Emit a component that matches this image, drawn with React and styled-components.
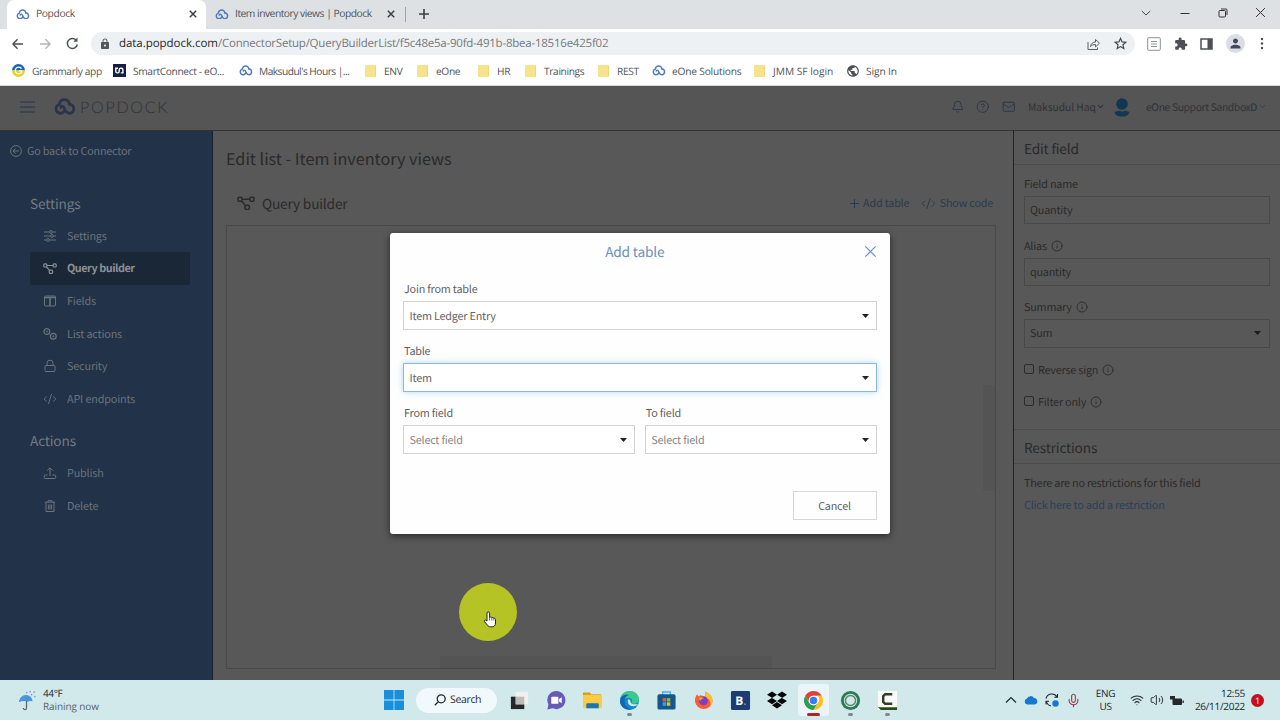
import React from "react";
import styled, { createGlobalStyle, css } from "styled-components";
import {
  Bell,
  ChevronDown,
  CircleQuestionMark,
  CodeXml,
  Info,
  Mail,
  Mic,
  Volume2,
  Wifi,
} from "lucide-react";
import { MdExtension, MdLock, MdPerson, MdPublic } from "react-icons/md";
import { FaDropbox } from "react-icons/fa";

const GlobalStyle = createGlobalStyle`
  * {
    box-sizing: border-box;
  }
  body {
    margin: 0;
    overflow: hidden;
    font-family: "Noto Sans CJK SC", "Open Sans", sans-serif;
    text-rendering: geometricPrecision;
  }
  svg {
    display: block;
    flex-shrink: 0;
  }
`;

const Screen = styled.div`
  position: relative;
  width: 1280px;
  height: 720px;
  display: flex;
  flex-direction: column;
  overflow: hidden;
`;

const Text = styled.span`
  display: block;
  white-space: nowrap;
  font-size: ${({ $size }) => $size || 10.8}px;
  line-height: 18px;
  letter-spacing: ${({ $ls }) => ($ls === undefined ? -0.2 : $ls)}px;
  font-weight: ${({ $bold }) => ($bold ? 700 : 400)};
  color: ${({ $color }) => $color || "inherit"};
`;

const Heading = styled(Text)`
  font-size: 13.7px;
  letter-spacing: -0.18px;
`;

/* ---------- browser ---------- */

const Browser = styled.div`
  font-family: "Open Sans", sans-serif;
  background: #fff;
  height: 86px;
  border-bottom: 1px solid #d5d7d8;
  color: #505458;
`;

const TabStrip = styled.div`
  display: flex;
  height: 29px;
  padding-left: 7px;
  background: #dde1e4;
`;

const Tab = styled.div`
  display: flex;
  align-items: center;
  width: ${({ $width }) => $width}px;
  height: 29px;
  padding: 0 9px 1px 9px;
  border-radius: 7px 7px 0 0;
  background: ${({ $active }) => ($active ? "#fff" : "transparent")};
  svg:last-child {
    margin-left: auto;
  }
  ${Text} {
    margin-left: 6px;
  }
`;

const TabDivider = styled.div`
  width: 1px;
  height: 15px;
  margin: 7px 13px 0 1px;
  background: #9ea3a8;
`;

const WindowButtons = styled.div`
  display: flex;
  align-items: center;
  gap: 26.6px;
  height: 25px;
  margin-left: auto;
  padding-right: 14px;
`;

const Toolbar = styled.div`
  display: flex;
  align-items: center;
  height: 29px;
  padding: 0 12px;
`;

const NavButtons = styled.div`
  display: flex;
  align-items: center;
  gap: 15px;
  width: 79px;
`;

const Omnibox = styled.div`
  display: flex;
  align-items: center;
  width: 1045px;
  height: 23px;
  padding: 0 8px 0 8px;
  border-radius: 12px;
  background: #eef1f4;
  svg:nth-last-child(2) {
    margin-left: auto;
    margin-right: 14px;
  }
  ${Text} {
    margin-left: 8px;
    color: #75797d;
  }
  b {
    font-weight: 400;
    letter-spacing: -0.03px;
    color: #25282b;
  }
`;

const ToolbarIcons = styled.div`
  display: flex;
  align-items: center;
  gap: 12.5px;
  margin-left: 12px;
`;

const Avatar = styled.div`
  display: grid;
  place-items: center;
  width: 19px;
  height: 19px;
  border-radius: 50%;
  background: #dcdde6;
`;

const Bookmarks = styled.div`
  display: flex;
  height: 25px;
  padding-left: 12px;
`;

const Bookmark = styled.div`
  display: grid;
  grid-template-columns: ${({ $icon }) => $icon}px auto;
  align-items: center;
  justify-content: start;
  width: ${({ $width }) => $width}px;
  flex-shrink: 0;
`;

const Folder = styled.div`
  width: 11px;
  height: 12px;
  border-radius: 1px;
  background: #f7e38c;
  border-right: 1px solid #ecd779;
`;

/* ---------- application ---------- */

const AppShell = styled.div`
  display: flex;
  flex-direction: column;
  height: 594px;
  background: #585858;
  color: #2a2a2a;
`;

const Header = styled.div`
  display: flex;
  align-items: center;
  height: 46px;
  padding: 0 13px 3px 20px;
  background: #555;
  border-bottom: 1px solid #333;
`;

const Brand = styled.div`
  display: flex;
  align-items: center;
  gap: 4px;
  margin-left: 19px;
  color: #29354b;
`;

const BrandName = styled.span`
  font: 300 16px/18px Lato, sans-serif;
  letter-spacing: 1.75px;
  color: #303235;
  padding-top: 3px;
`;

const HeaderActions = styled.div`
  display: flex;
  align-items: center;
  margin-left: auto;
  color: #29354b;
  > svg {
    margin: 2px 0 0 12px;
  }
`;

const HeaderIcons = styled.div`
  display: flex;
  gap: 12px;
`;

const UserName = styled.div`
  display: flex;
  align-items: center;
  width: ${({ $width }) => $width}px;
  margin-left: ${({ $gap }) => $gap}px;
  color: #303236;
  svg {
    margin-left: auto;
  }
`;

const Body = styled.div`
  display: flex;
  flex: 1;
`;

const Sidebar = styled.div`
  width: 213px;
  padding-top: 10.6px;
  background: #223248;
  border-right: 1px solid #17202c;
  color: #6b737c;
`;

const BackLink = styled.div`
  display: flex;
  align-items: center;
  gap: 5px;
  height: 18px;
  padding-left: 10px;
`;

const SideHeading = styled.div`
  padding-left: 30px;
  margin-top: ${({ $top }) => $top}px;
  color: #737a82;
`;

const SideItem = styled.div`
  display: grid;
  grid-template-columns: 14px auto;
  gap: 10px;
  align-items: center;
  justify-content: start;
  width: 160px;
  height: 32.6px;
  margin-left: 30px;
  padding-left: 13px;
  border-radius: 2px;
  ${({ $active }) =>
    $active &&
    css`
      background: #1a2736;
      color: #8c9197;
    `}
`;

const SideGroup = styled.div`
  margin-top: 8px;
`;

const Main = styled.div`
  width: 800px;
  padding: 18px 17px 11px 13px;
`;

const QueryBar = styled.div`
  display: flex;
  align-items: center;
  height: 18px;
  margin: 27px 3px 13px 11px;
  > ${Heading} {
    margin-left: 7px;
  }
`;

const BarLinks = styled.div`
  display: flex;
  align-items: center;
  margin-left: auto;
  color: #2b3a52;
  svg + ${Text} {
    margin-left: 3.5px;
  }
  ${Text} + svg {
    margin-left: 12px;
  }
`;

const Canvas = styled.div`
  display: grid;
  grid-template-columns: 1fr 12px;
  grid-template-rows: 1fr 12px;
  height: 444px;
  border: 1px solid #494949;
`;

const VerticalThumb = styled.div`
  height: 106px;
  margin-top: 159px;
  background: #545454;
`;

const HorizontalThumb = styled.div`
  grid-row: 2;
  width: 332px;
  margin-left: 213px;
  background: #545454;
`;

const Panel = styled.div`
  width: 267px;
  border-left: 1px solid #222;
`;

const PanelTitle = styled.div`
  height: 34px;
  padding: 8px 0 0 10px;
  border-bottom: 1px solid #4b4b4b;
`;

const PanelBody = styled.div`
  padding: 10px 10px 0;
`;

const LabelRow = styled.div`
  display: flex;
  align-items: center;
  gap: 4px;
  height: 18px;
  margin-bottom: ${({ $below }) => $below || 3}px;
`;

const Input = styled.div`
  display: flex;
  align-items: center;
  justify-content: space-between;
  height: 28.4px;
  width: 246px;
  margin-bottom: ${({ $below }) => $below || 12.2}px;
  padding: 0 8px 0 5px;
  border: 1px solid #494949;
`;

const CheckRow = styled.div`
  display: flex;
  align-items: center;
  gap: 4px;
  height: 18px;
  margin-bottom: 14px;
`;

const CheckBox = styled.div`
  width: 10px;
  height: 10px;
  margin-bottom: 3px;
  border: 1px solid #2b2b2b;
  border-radius: 2px;
`;

const Restrictions = styled.div`
  margin-top: 18px;
  border-top: 1px solid #4c4c4c;
`;

/* ---------- modal ---------- */

const Modal = styled.div`
  position: absolute;
  left: 390px;
  top: 233px;
  width: 499.5px;
  height: 300.5px;
  padding: 9px 13px 0;
  border-radius: 3px;
  background: #fefefe;
  box-shadow: 0 2px 7px rgba(0, 0, 0, 0.55);
  color: #5f5f5f;
`;

const ModalHeader = styled.div`
  display: grid;
  grid-template-columns: 1fr auto;
  align-items: center;
  height: 18px;
  margin-bottom: 20px;
  color: #6a8fbf;
  ${Heading} {
    padding-left: 3px;
    text-align: center;
  }
`;

const FieldLabel = styled.div`
  padding-left: 1px;
  height: 18px;
  margin-bottom: 3px;
`;

const Select = styled.div`
  display: flex;
  align-items: center;
  justify-content: space-between;
  height: 29px;
  padding: 0 7px 0 5.5px;
  border: 1px solid ${({ $focused }) => ($focused ? "#8bb6de" : "#d3d3d3")};
  background: #fff;
  box-shadow: ${({ $focused }) =>
    $focused ? "0 0 6px rgba(102, 175, 233, 0.5)" : "none"};
  color: ${({ $placeholder }) => ($placeholder ? "#868686" : "#626262")};
`;

const FieldBlock = styled.div`
  height: 62px;
`;

const FieldPair = styled.div`
  display: grid;
  grid-template-columns: 1fr 1fr;
  gap: 10px;
`;

const CancelButton = styled.div`
  display: grid;
  place-items: center;
  width: 84px;
  height: 29px;
  margin: 25px 0 0 auto;
  border: 1px solid #d6d6d6;
`;

const Pointer = styled.div`
  position: absolute;
  left: 459px;
  top: 583px;
  width: 58px;
  height: 58px;
  padding: 28px 0 0 24px;
  border-radius: 50%;
  background: #b5c424;
`;

/* ---------- taskbar ---------- */

const Taskbar = styled.div`
  display: grid;
  grid-template-columns: 384px 1fr auto;
  height: 40px;
  background: #d2e9ec;
  font-family: "Open Sans", sans-serif;
  color: #20282b;
`;

const Weather = styled.div`
  display: flex;
  align-items: center;
  gap: 7px;
  padding-left: 19px;
  ${Text} {
    line-height: 13px;
  }
`;

const TaskIcons = styled.div`
  display: flex;
  align-items: center;
`;

const SearchPill = styled.div`
  display: flex;
  align-items: center;
  gap: 4px;
  width: 81px;
  height: 25px;
  margin: 0 4px 0 12px;
  padding-left: 18px;
  border-radius: 13px;
  background: #f2f9fc;
`;

const TaskIcon = styled.div`
  display: grid;
  grid-template-rows: 34px 3px;
  justify-items: center;
  align-items: center;
  width: 36.8px;
  height: 40px;
  padding-top: 3px;
`;

const TaskTile = styled.div`
  display: grid;
  place-items: center;
  width: 31px;
  height: 32px;
  border-radius: 3px;
  background: ${({ $active }) => ($active ? "#ebf5f7" : "transparent")};
`;

const RunMark = styled.div`
  width: ${({ $active }) => ($active ? 13 : 5)}px;
  height: 2.5px;
  margin-top: -8px;
  border-radius: 2px;
  background: ${({ $active }) => ($active ? "#b3202c" : "#7c8a8f")};
`;

const Tray = styled.div`
  display: flex;
  align-items: center;
  padding-right: 16px;
`;

const TrayIcons = styled.div`
  display: flex;
  align-items: center;
  gap: ${({ $gap }) => $gap}px;
`;

const TrayText = styled.div`
  width: ${({ $width }) => $width}px;
  text-align: ${({ $align }) => $align};
  ${Text} {
    line-height: 13px;
  }
`;

const Notification = styled.div`
  display: grid;
  place-items: center;
  width: 13px;
  height: 13px;
  margin-left: 6px;
  border-radius: 50%;
  background: #c50f1f;
  color: #fff;
  font-size: 9px;
  line-height: 13px;
`;

/* ---------- drawings ---------- */

const CloudLogo = ({ width = 14, color = "#4f7dbd", stroke = 2.3 }) => (
  <svg
    width={width}
    height={(width * 17) / 22}
    viewBox="0 0 22 17"
    fill="none"
    stroke={color}
    strokeWidth={stroke}
    strokeLinecap="round"
  >
    <path d="M10.8 12.4c-1 1.9-2.400 2.900-4.500 2.900A4.500 4.500 0 0 1 5.200 6.500C5.700 3.500 7.700 1.700 10.500 1.700c2.600 0 4.400 1.700 5.200 4.700" />
    <path d="M15.700 6.400a4.500 4.500 0 0 1 .3 8.900c-2.300 0-3.600-1.200-4.600-3L9.600 9C8.800 7.600 7 7.800 6.600 9.400" />
  </svg>
);

const Cross = ({ size = 8, width = 1.5, color = "#3c4043" }) => (
  <svg width={size} height={size} viewBox="0 0 10 10" stroke={color} strokeWidth={(width * 10) / size}>
    <path d="M1 1l8 8M9 1L1 9" />
  </svg>
);

const Caret = ({ color = "#222" }) => (
  <svg width="7" height="4" viewBox="0 0 7 4">
    <path d="M0 0h7L3.5 4z" fill={color} />
  </svg>
);

const Nodes = ({ size = 14 }) => (
  <svg width={size} height={size * 0.8} viewBox="0 0 18 14" fill="none" stroke="currentColor" strokeWidth="1.5">
    <rect x="1" y="1" width="4" height="4" rx="1.3" />
    <rect x="13" y="1" width="4" height="4" rx="1.3" />
    <rect x="8" y="9" width="4.400" height="4.200" rx="1.300" />
    <path d="M5 3h8M4.500 4.800L8.600 9.500" />
  </svg>
);

const Arrow = ({ flip, color }) => (
  <svg width="12" height="12" viewBox="0 0 12 12" fill="none" stroke={color} strokeWidth="1.4">
    <path d={flip ? "M1 6h10M6.5 1.3L11 6l-4.5 4.7" : "M11 6H1M5.5 1.3L1 6l4.5 4.7"} />
  </svg>
);

const SideIcon = ({ name }) => {
  const shapes = {
    settings: (
      <>
        <path d="M1 3h5.600M9.400 3H13M1 7h6.600M10.400 7H13M1 11h2.600M6.400 11H13" />
        <circle cx="8" cy="3" r="1.400" />
        <circle cx="9" cy="7" r="1.400" />
        <circle cx="5" cy="11" r="1.400" />
      </>
    ),
    fields: (
      <>
        <rect x="1.5" y="2" width="11" height="10" rx="0.7" />
        <path d="M1.5 3.5h11M7 4v8" strokeWidth="1.6" />
      </>
    ),
    actions: (
      <>
        <circle cx="3.800" cy="4.500" r="2.900" strokeWidth="1.200" />
        <circle cx="3.800" cy="4.500" r=".6" />
        <circle cx="10.300" cy="9.300" r="2.900" strokeWidth="1.200" />
        <circle cx="10.300" cy="9.300" r=".6" />
      </>
    ),
    security: (
      <>
        <rect x="2" y="6.5" width="10" height="6" rx="1" />
        <path d="M4 6.5V4.2a3 3 0 0 1 6 0v2.3" />
      </>
    ),
    publish: (
      <>
        <path d="M4.500 9H2.200a.9.9 0 0 0-.9.9v1.700a.9.9 0 0 0 .9.9h9.600a.9.9 0 0 0 .9-.9V9.900a.9.9 0 0 0-.9-.9H9.500" />
        <path d="M7 10V2M4.200 4.600L7 1.800l2.800 2.800" />
      </>
    ),
    remove: (
      <path d="M1.800 3.200h10.400M5 3V1.700h4V3M3 3.400V12.500h8V3.400M5.400 5.500v5M7 5.500v5M8.600 5.500v5" />
    ),
  };
  return (
    <svg width="14" height="14" viewBox="0 0 14 14" fill="none" stroke="currentColor" strokeWidth="1">
      {shapes[name]}
    </svg>
  );
};

/* ---------- sections ---------- */

const bookmarks = [
  { label: "Grammarly app", width: 101, kind: "grammarly" },
  { label: "SmartConnect - eO...", width: 126, kind: "smart" },
  { label: "Maksudul's Hours |...", width: 126, kind: "cloud", ls: -0.52 },
  { label: "ENV", width: 52 },
  { label: "eOne", width: 61 },
  { label: "HR", width: 47 },
  { label: "Trainings", width: 73 },
  { label: "REST", width: 54 },
  { label: "eOne Solutions", width: 102, kind: "cloud", ls: -0.2 },
  { label: "JMM SF login", width: 92, ls: 0 },
  { label: "Sign In", width: 60, kind: "globe", ls: -0.1 },
];

const BookmarkIcon = ({ kind }) => {
  if (kind === "cloud") return <CloudLogo />;
  if (kind === "globe") return <MdPublic size={14} color="#4b4e52" />;
  if (kind === "grammarly")
    return (
      <svg width="13" height="13" viewBox="0 0 13 13">
        <path d="M0 6.500a6.500 6.500 0 0 1 13 0z" fill="#1763b6" />
        <path d="M0 6.500a6.500 6.500 0 0 0 13 0z" fill="#f2cf1d" />
        <path d="M9.500 4.700A3.400 3.400 0 1 0 9.700 8V6.800H7" fill="none" stroke="#fff" strokeWidth="1.300" />
      </svg>
    );
  if (kind === "smart")
    return (
      <svg width="13" height="13" viewBox="0 0 13 13">
        <rect width="13" height="13" fill="#141f45" />
        <path d="M5 4.300H2.800v3.200a1.400 1.400 0 0 0 1.400 1.400h.6a1.400 1.400 0 0 0 1.400-1.400V5.700a1.400 1.400 0 0 1 1.400-1.400h.9a1.400 1.400 0 0 1 1.400 1.400v3.200H7.800" fill="none" stroke="#fff" strokeWidth="1.400" />
      </svg>
    );
  return <Folder />;
};

const BrowserChrome = () => (
  <Browser>
    <TabStrip>
      <Tab $active $width={199}>
        <CloudLogo />
        <Text $size={10.3} $ls={-0.4}>Popdock</Text>
        <Cross />
      </Tab>
      <Tab $width={198}>
        <CloudLogo />
        <Text $size={10.3} $ls={-0.5}>Item inventory views | Popdock</Text>
        <Cross />
      </Tab>
      <TabDivider />
      <svg width="10" height="28" viewBox="0 0 10 28" stroke="#3c4043" strokeWidth="1.600">
        <path d="M0 14h10M5 9v10" />
      </svg>
      <WindowButtons>
        <svg width="10" height="10" viewBox="0 0 10 10" fill="none" stroke="#44484c">
          <path d="M.8 3l4.200 4L9.200 3" />
        </svg>
        <svg width="14" height="10" viewBox="0 0 14 10" stroke="#333">
          <path d="M2.500 5.500h9" />
        </svg>
        <svg width="10" height="10" viewBox="0 0 10 10" fill="none" stroke="#333">
          <rect x="1" y="2.500" width="6.500" height="6.500" rx="1" />
          <path d="M3 1h5a1 1 0 0 1 1 1v5" />
        </svg>
        <Cross size={11} width={1} color="#333" />
      </WindowButtons>
    </TabStrip>
    <Toolbar>
      <NavButtons>
        <Arrow color="#4c5054" />
        <Arrow flip color="#b4b7ba" />
        <svg width="13" height="13" viewBox="0 0 13 13" fill="none" stroke="#4c5054" strokeWidth="1.500">
          <path d="M11.300 7.500A5 5 0 1 1 10 3" />
          <path d="M11.500.5v4.200H7.300z" fill="#4c5054" stroke="none" />
        </svg>
      </NavButtons>
      <Omnibox>
        <MdLock size={12} color="#54585c" />
        <Text $size={11.5} $ls={-0.23}>
          <b>data.popdock.com</b>/ConnectorSetup/QueryBuilderList/f5c48e5a-90fd-491b-8bea-18516e425f02
        </Text>
        <svg width="13" height="12" viewBox="0 0 13 12" fill="none" stroke="#5a5e62">
          <path d="M1 4v7.500h9.500V9.500M3.500 8.500C4 5.500 6 4 8.500 4V1.500l4 3.700-4 3.700V6.500c-2 0-3.700.5-5 2z" />
        </svg>
        <svg width="13" height="13" viewBox="0 0 24 24" fill="none" stroke="#44484c" strokeWidth="2.200">
          <path d="M12 2.500l2.900 6.500 7 .7-5.300 4.700 1.500 6.900L12 17.700l-6.100 3.600 1.500-6.900L2.100 9.700l7-.7z" />
        </svg>
      </Omnibox>
      <ToolbarIcons>
        <svg width="14" height="14" viewBox="0 0 14 14" fill="none" stroke="#8e9194">
          <rect x=".7" y=".7" width="12.600" height="12.600" rx="1" />
          <path d="M4 4.500h6M4 7h6M4 9.500h6" />
        </svg>
        <MdExtension size={14} color="#4c5054" />
        <svg width="13" height="12" viewBox="0 0 13 12">
          <rect x="1" y="1" width="11" height="10" fill="none" stroke="#4c5054" strokeWidth="1.500" />
          <rect x="7.500" y="1" width="4.500" height="10" fill="#4c5054" />
        </svg>
        <Avatar>
          <MdPerson size={15} color="#45465a" />
        </Avatar>
        <svg width="11" height="13" viewBox="0 0 11 13" fill="#4c5054">
          <circle cx="5" cy="2" r="1.200" />
          <circle cx="5" cy="6.500" r="1.200" />
          <circle cx="5" cy="11" r="1.200" />
        </svg>
      </ToolbarIcons>
    </Toolbar>
    <Bookmarks>
      {bookmarks.map(({ label, width, kind, ls = -0.35 }) => (
        <Bookmark key={label} $width={width} $icon={kind ? 20 : 19}>
          <BookmarkIcon kind={kind} />
          <Text $size={10.2} $ls={ls}>{label}</Text>
        </Bookmark>
      ))}
    </Bookmarks>
  </Browser>
);

const AppHeader = () => (
  <Header>
    <svg width="15" height="12" viewBox="0 0 15 12" stroke="#29354b" strokeWidth="1.200">
      <path d="M0 1h15M0 6h15M0 11h15" />
    </svg>
    <Brand>
      <CloudLogo width={22} color="#29354b" stroke={2.7} />
      <BrandName>POPDOCK</BrandName>
    </Brand>
    <HeaderActions>
      <HeaderIcons>
        <Bell size={13.5} strokeWidth={1.7} />
        <CircleQuestionMark size={13.5} strokeWidth={1.7} />
        <Mail size={13.5} strokeWidth={1.7} />
      </HeaderIcons>
      <UserName $width={74} $gap={13}>
        <Text $size={10.3} $ls={-0.05}>Maksudul Haq</Text>
        <ChevronDown size={9} strokeWidth={3} />
      </UserName>
      <svg width="16" height="19" viewBox="0 0 16 19" fill="#123750">
        <circle cx="8" cy="6" r="5.800" />
        <path d="M.5 13.500c2 .5 3-.5 4-1 2 1.400 5 1.400 7 0 1 .5 2 1.500 4 1-.3 3-3 5-7.500 5s-7.200-2-7.500-5z" />
      </svg>
      <UserName $width={121} $gap={16}>
        <Text $size={10.3} $ls={-0.35}>eOne Support SandboxD</Text>
        <ChevronDown size={9} strokeWidth={2} />
      </UserName>
    </HeaderActions>
  </Header>
);

const settingsItems = [
  { label: "Settings", icon: <SideIcon name="settings" /> },
  { label: "Query builder", icon: <Nodes />, active: true },
  { label: "Fields", icon: <SideIcon name="fields" /> },
  { label: "List actions", icon: <SideIcon name="actions" /> },
  { label: "Security", icon: <SideIcon name="security" /> },
  { label: "API endpoints", icon: <CodeXml size={14} strokeWidth={1.6} /> },
];

const actionItems = [
  { label: "Publish", icon: <SideIcon name="publish" /> },
  { label: "Delete", icon: <SideIcon name="remove" /> },
];

const SideList = ({ items }) => (
  <SideGroup>
    {items.map(({ label, icon, active }) => (
      <SideItem key={label} $active={active}>
        {icon}
        <Text $bold={active} $ls={active ? -0.45 : -0.15}>{label}</Text>
      </SideItem>
    ))}
  </SideGroup>
);

const SideNav = () => (
  <Sidebar>
    <BackLink>
      <svg width="12" height="12" viewBox="0 0 12 12" fill="none" stroke="currentColor">
        <circle cx="6" cy="6" r="5.400" />
        <path d="M9 6H3.300M5.500 3.500L3 6l2.500 2.500" />
      </svg>
      <Text>Go back to Connector</Text>
    </BackLink>
    <SideHeading $top={34}>
      <Heading>Settings</Heading>
    </SideHeading>
    <SideList items={settingsItems} />
    <SideHeading $top={15.5}>
      <Heading>Actions</Heading>
    </SideHeading>
    <SideList items={actionItems} />
  </Sidebar>
);

const QueryBuilder = () => (
  <Main>
    <Text $size={16.2} $ls={0}>Edit list - Item inventory views</Text>
    <QueryBar>
      <Nodes size={18} />
      <Heading>Query builder</Heading>
      <BarLinks>
        <svg width="11" height="11" viewBox="0 0 11 11" stroke="currentColor">
          <path d="M1 5.500h9M5.500 1v9" />
        </svg>
        <Text>Add table</Text>
        <CodeXml size={15} strokeWidth={1.6} />
        <Text>Show code</Text>
      </BarLinks>
    </QueryBar>
    <Canvas>
      <div />
      <VerticalThumb />
      <HorizontalThumb />
    </Canvas>
  </Main>
);

const InfoIcon = () => <Info size={12} strokeWidth={1.8} />;

const FieldPanel = () => (
  <Panel>
    <PanelTitle>
      <Heading>Edit field</Heading>
    </PanelTitle>
    <PanelBody>
      <LabelRow><Text>Field name</Text></LabelRow>
      <Input><Text>Quantity</Text></Input>
      <LabelRow><Text>Alias</Text><InfoIcon /></LabelRow>
      <Input><Text>quantity</Text></Input>
      <LabelRow><Text>Summary</Text><InfoIcon /></LabelRow>
      <Input $below={13.5}><Text>Sum</Text><Caret color="#1c1c1c" /></Input>
      <CheckRow><CheckBox /><Text>Reverse sign</Text><InfoIcon /></CheckRow>
      <CheckRow><CheckBox /><Text>Filter only</Text><InfoIcon /></CheckRow>
    </PanelBody>
    <Restrictions>
      <PanelTitle>
        <Heading>Restrictions</Heading>
      </PanelTitle>
      <PanelBody>
        <LabelRow $below={4}><Text>There are no restrictions for this field</Text></LabelRow>
        <LabelRow><Text $color="#26405c">Click here to add a restriction</Text></LabelRow>
      </PanelBody>
    </Restrictions>
  </Panel>
);

const Field = ({ label, value, focused, placeholder }) => (
  <FieldBlock>
    <FieldLabel><Text>{label}</Text></FieldLabel>
    <Select $focused={focused} $placeholder={placeholder}>
      <Text>{value}</Text>
      <Caret />
    </Select>
  </FieldBlock>
);

const AddTableModal = () => (
  <Modal>
    <ModalHeader>
      <Heading>Add table</Heading>
      <Cross size={13} width={1.2} color="#6a8fbf" />
    </ModalHeader>
    <Field label="Join from table" value="Item Ledger Entry" />
    <Field label="Table" value="Item" focused />
    <FieldPair>
      <Field label="From field" value="Select field" placeholder />
      <Field label="To field" value="Select field" placeholder />
    </FieldPair>
    <CancelButton><Text>Cancel</Text></CancelButton>
  </Modal>
);

const HandPointer = () => (
  <Pointer>
    <svg width="14" height="17" viewBox="0 0 14 17" fill="#fff" stroke="#222" strokeWidth="1">
      <path d="M4 10V2.200a1.300 1.300 0 0 1 2.600 0V6.500c.5-.7 1.900-.6 2.200.3.600-.6 1.800-.4 2 .5.900-.3 1.700.2 1.700 1.200V12c0 2-1.200 3.800-3.200 3.800H7.200c-1.200 0-2-.6-2.600-1.500L1.500 10.600c-.7-1 .5-2 1.400-1.300z" />
      <path d="M6.600 6.500v3M8.800 7v2.500M10.800 7.500v2" strokeWidth=".7" />
    </svg>
  </Pointer>
);

const taskIcons = [
  {
    name: "desktops",
    art: (
      <>
        <rect x="2" y="7" width="14" height="13" fill="#25282a" />
        <rect x="7" y="2" width="13" height="13" fill="#f1f0ee" />
        <rect x="7" y="7" width="9" height="8" fill="#bcbcb9" />
      </>
    ),
  },
  {
    name: "chat",
    art: (
      <>
        <path d="M11 1a9.500 9.500 0 1 1-4 18.200L1.500 20.500 2.500 15A9.500 9.500 0 0 1 11 1z" fill="#6659b8" />
        <rect x="5.500" y="7" width="7.500" height="7.500" rx="1" fill="#fff" />
        <path d="M13.700 9.500l2.800-2v6.500l-2.800-2z" fill="#fff" />
      </>
    ),
  },
  {
    name: "explorer",
    art: (
      <>
        <path d="M1 2.500h7l2 2h10v4H1z" fill="#d69a1c" />
        <rect x="1" y="5" width="20" height="14" rx="1" fill="#fbcb45" />
        <path d="M4.500 19v-4a1 1 0 0 1 1-1h11a1 1 0 0 1 1 1v4z" fill="#1976b5" />
      </>
    ),
  },
  {
    name: "edge",
    open: true,
    art: (
      <>
        <circle cx="11" cy="11" r="10" fill="#1488cf" />
        <path d="M2 7.500C4 2.500 8 1 11.500 1 17 1 21 5 21 10c0 3-2.500 4.500-5 4.500-2 0-3.500-1-2.500-2.500.8-1.500-.3-4-3.500-4-3 0-6 1-8 3.500z" fill="#3bc98e" />
        <path d="M2 8c2-3 6-4 9-2.500-4 0-6 4-5 8 1 4 4.500 6.500 9 6-7 3-13.500-1.500-14-7.500z" fill="#1167b4" />
        <path d="M10 9.500c-2 3 0 7.500 5 7.500 2 0 4-.7 5-2-2 0-8 .5-8-3 0-1-1-2-2-2.500z" fill="#d2e9ec" />
      </>
    ),
  },
  {
    name: "store",
    art: (
      <>
        <path d="M7 5V2h8v3" fill="none" stroke="#3fb3e6" strokeWidth="1.500" />
        <rect x="1.500" y="4.500" width="19" height="16" rx="2" fill="#17568c" />
        <path d="M7 8.500h3.600v3.600H7z" fill="#f0592b" />
        <path d="M11.400 8.500H15v3.600h-3.600z" fill="#86bc25" />
        <path d="M7 12.900h3.600v3.600H7z" fill="#27aae1" />
        <path d="M11.400 12.900H15v3.600h-3.600z" fill="#fdbb14" />
      </>
    ),
  },
  {
    name: "firefox",
    art: (
      <>
        <path d="M13 1.500c5 2.500 7.500 6 7.500 10A9.300 9.300 0 0 1 2 11.500C2 8.500 3 6 4.500 4.500l1 2L8 5.500l5 1.500z" fill="#fb5b37" />
        <path d="M13 1.500c5 2.500 7.500 6 7.500 10 0 2-.7 4-2 5.500.5-4-1-7-4-8.500-1.500-2-2-4.500-1.500-7z" fill="#fec130" />
        <circle cx="11" cy="11.500" r="4.600" fill="#7a3fc9" />
        <path d="M6 8.500c2-1.500 4-1 5.500.5-2 0-3 .8-3.200 2.200C7 11 6 10 6 8.500z" fill="#ff9a33" />
      </>
    ),
  },
  {
    name: "booking",
    art: (
      <>
        <rect x="1" y="1" width="20" height="20" rx="1.500" fill="#1c3c73" />
        <text x="5.500" y="15.500" fontFamily="Open Sans, sans-serif" fontWeight="700" fontSize="12.500" fill="#fff">B</text>
        <circle cx="15.700" cy="14.800" r="1" fill="#35a8e0" />
      </>
    ),
  },
  { name: "dropbox" },
  {
    name: "chrome",
    open: true,
    active: true,
    art: (
      <>
        <circle cx="11" cy="11" r="10" fill="#fff" />
        <path d="M11 1a10 10 0 0 1 8.660 5H11a5 5 0 0 0-4.330 7.500L2.340 6A10 10 0 0 1 11 1z" fill="#dc4437" />
        <path d="M19.660 6A10 10 0 0 1 11 21l4.330-7.500A5 5 0 0 0 15.300 6z" fill="#fbc116" />
        <path d="M2.340 6l4.330 7.500A5 5 0 0 0 15.330 13.500L11 21A10 10 0 0 1 2.340 6z" fill="#2b9d50" />
        <circle cx="11" cy="11" r="5" fill="#fff" />
        <circle cx="11" cy="11" r="3.900" fill="#3b7ded" />
      </>
    ),
  },
  {
    name: "recorder",
    open: true,
    art: (
      <>
        <circle cx="11" cy="11" r="10" fill="#2a7d4f" />
        <circle cx="11" cy="11" r="7" fill="#d5e8e4" />
        <circle cx="11" cy="11" r="5.300" fill="#d5e8e4" stroke="#54877a" strokeWidth="1.500" />
      </>
    ),
  },
  {
    name: "camtasia",
    open: true,
    art: (
      <>
        <rect x="1" y="1" width="20" height="20" fill="#f8faf7" />
        <path d="M16 4.500H8.500L6.500 6.500v6l2 2H16" fill="none" stroke="#31402a" strokeWidth="2.600" />
        <path d="M1 18h20v3H4z" fill="#2c4a17" />
      </>
    ),
  },
];

const TaskButton = ({ art, open, active }) => (
  <TaskIcon>
    <TaskTile $active={active}>
      {art ? (
        <svg width="21" height="21" viewBox="0 0 22 22">{art}</svg>
      ) : (
        <FaDropbox size={20} color="#080808" />
      )}
    </TaskTile>
    {open && <RunMark $active={active} />}
  </TaskIcon>
);

const SystemTaskbar = () => (
  <Taskbar>
    <Weather>
      <svg width="17" height="21" viewBox="0 0 17 21">
        <path d="M0 12C0 8 4 4.500 7.500 5c3.500.4 6 3 6 6.500-2-.8-3.500-.6-4.500.3-2.500-1.200-6-.8-9 .2z" fill="#4b95dc" />
        <path d="M7.500 10.500V18a1.600 1.600 0 0 1-3.200 0" fill="none" stroke="#5a6872" strokeWidth="1.300" />
        <path d="M8 2l-.8 1.300M11.500 1l-.8 1.300M15.500 1.500l-.8 1.300M13 4l-.8 1.300M16.300 6l-.8 1.300" stroke="#5f93cd" strokeWidth="1.200" />
      </svg>
      <div>
        <Text $size={10} $ls={-0.4}>44°F</Text>
        <Text $size={10} $ls={-0.1} $color="#566367">Raining now</Text>
      </div>
    </Weather>
    <TaskIcons>
      <svg width="20" height="20" viewBox="0 0 20 20" fill="#178fdc">
        <path d="M0 0h9.600v9.600H0zM10.400 0H20v9.600h-9.600zM0 10.400h9.600V20H0zM10.400 10.400H20V20h-9.600z" />
      </svg>
      <SearchPill>
        <svg width="12" height="12" viewBox="0 0 12 12" fill="none" stroke="#22282b" strokeWidth="1.300">
          <circle cx="7.200" cy="4.800" r="4" />
          <path d="M4.300 7.700L.8 11.200" />
        </svg>
        <Text $size={10.5} $ls={-0.35}>Search</Text>
      </SearchPill>
      {taskIcons.map((icon) => (
        <TaskButton key={icon.name} {...icon} />
      ))}
    </TaskIcons>
    <Tray>
      <TrayIcons $gap={7}>
        <svg width="12" height="12" viewBox="0 0 12 12" fill="none" stroke="#22282b" strokeWidth="1.200">
          <path d="M1 8.500l5-5 5 5" />
        </svg>
        <svg width="14" height="10" viewBox="0 0 14 10">
          <path d="M3.500 9.500a3 3 0 0 1-.6-5.900A4 4 0 0 1 10 3a3.300 3.300 0 0 1 .8 6.500z" fill="#1479d0" />
        </svg>
        <svg width="14" height="14" viewBox="0 0 14 14" fill="none" stroke="#22282b" strokeWidth="1.100">
          <path d="M1 5.500A6 6 0 0 1 12 4M12.500 1v3.300H9.300M1.500 8.500A6 6 0 0 0 6 13M1 11.500V8.300h3" />
          <circle cx="10.500" cy="10.500" r="3.200" fill="#1479d0" stroke="none" />
        </svg>
        <Mic size={15} color="#a33a4c" strokeWidth={1.8} />
      </TrayIcons>
      <TrayText $width={49} $align="center">
        <Text $size={10} $ls={-0.3}>ENG</Text>
        <Text $size={10} $ls={-0.3}>US</Text>
      </TrayText>
      <TrayIcons $gap={6}>
        <Wifi size={14} strokeWidth={1.8} />
        <Volume2 size={14} strokeWidth={1.6} />
        <svg width="14" height="11" viewBox="0 0 14 11" fill="#22282b">
          <rect x="2.500" y="3.500" width="9.500" height="6.500" rx="1" />
          <rect x="12.500" y="5.500" width="1.300" height="2.500" />
          <path d="M0 1h5v3.500H0z" />
        </svg>
      </TrayIcons>
      <TrayText $width={61} $align="right">
        <Text $size={10} $ls={-0.3}>12:55</Text>
        <Text $size={10} $ls={-0.3}>26/11/2022</Text>
      </TrayText>
      <Notification>1</Notification>
    </Tray>
  </Taskbar>
);

const App = () => {
  return (
    <Screen>
      <GlobalStyle />
      <BrowserChrome />
      <AppShell>
        <AppHeader />
        <Body>
          <SideNav />
          <QueryBuilder />
          <FieldPanel />
        </Body>
      </AppShell>
      <SystemTaskbar />
      <AddTableModal />
      <HandPointer />
    </Screen>
  );
};

export default App;
